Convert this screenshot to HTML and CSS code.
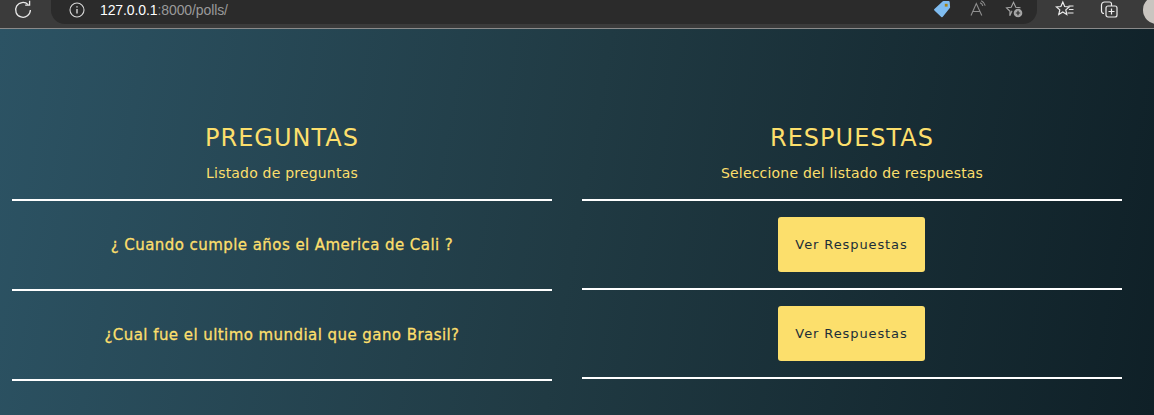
FILE: index.html
```html
<!DOCTYPE html>
<html lang="es">
<head>
<meta charset="utf-8">
<title>Polls</title>
<link rel="stylesheet" href="styles.css">
</head>
<body>
<header class="chrome">
  <svg class="reload" width="20" height="20" viewBox="0 0 20 20" fill="none" stroke="#e8e8e8" stroke-width="1.3"><path d="M15.2 4.6A7.4 7.4 0 1 0 17.4 10"/><path d="M16.6 0.8v4.4h-4.4"/></svg>
  <div class="address">
    <svg class="info" width="16" height="16" viewBox="0 0 16 16" fill="none" stroke="#d8d8d8" stroke-width="1.1"><circle cx="8" cy="8" r="7"/><path d="M8 7v4.6M8 4.2v1.3" stroke-width="1.4"/></svg>
    <span class="url"><span class="host">127.0.0.1</span>:8000/polls/</span>
    <div class="address-icons">
      <svg width="20" height="20" viewBox="0 0 20 20"><path d="M11.5 1h5.2a1 1 0 0 1 1 .9l.4 5.2a1 1 0 0 1-.3.8l-7 8.9a1 1 0 0 1-1.5.1L2.4 10.600a1 1 0 0 1 0-1.500l8.400-7.800a1 1 0 0 1 .7-.3z" fill="#7fbcf0"/><rect x="12.800" y="3.800" width="2.800" height="2.800" fill="#a98412"/></svg>
      <svg width="20" height="20" viewBox="0 0 20 20" fill="none" stroke="#8f8f8f" stroke-width="1.1"><path d="M3 15.500 8.300 3.500 13.800 15.500M4.800 11.500h7.200"/><path d="M12 2.800a4.500 4.500 0 0 1 2.800 3.200M13.200 .8a7 7 0 0 1 4 4.800"/></svg>
      <svg width="20" height="20" viewBox="0 0 20 20" fill="none" stroke="#a6a6a6" stroke-width="1.1"><path d="M8 10.800 5.800 15.800 6 11.300 2.500 7.800l4.700-.6L9.500 2.200l2.300 5 4.700.6"/><circle cx="14" cy="13" r="4.300" fill="#a6a6a6" stroke="none"/><path d="M11.800 13h4.400M14 10.800v4.400" stroke="#2b2b2b" stroke-width="1.200"/></svg>
    </div>
  </div>
  <svg class="tool-fav" width="20" height="20" viewBox="0 0 20 20" fill="none" stroke="#eee" stroke-width="1.2"><path d="M7.800 2 9.700 6.500l4.500.4-3.400 3 1 4.500-4-2.400-4 2.400 1-4.500-3.400-3 4.500-.4z"/><path d="M13.500 6h5M14 9.500h4.500M12.500 13h6"/></svg>
  <svg class="tool-col" width="20" height="20" viewBox="0 0 20 20" fill="none" stroke="#eee" stroke-width="1.2"><path d="M4 13.500A2.500 2.500 0 0 1 1.500 11V5A3 3 0 0 1 4.500 2h5a2 2 0 0 1 2 2v2"/><rect x="6" y="6" width="11" height="11" rx="2"/><path d="M11.500 8.500v6M8.500 11.500h6"/></svg>
  <div class="avatar"></div>
</header>
<main class="page">
  <section class="col">
    <div class="head">
      <h1 class="title">PREGUNTAS</h1>
      <p class="sub">Listado de preguntas</p>
    </div>
    <div class="row"><p class="question">¿ Cuando cumple años el America de Cali ?</p></div>
    <div class="row"><p class="question">¿Cual fue el ultimo mundial que gano Brasil?</p></div>
  </section>
  <section class="col">
    <div class="head">
      <h1 class="title">RESPUESTAS</h1>
      <p class="sub">Seleccione del listado de respuestas</p>
    </div>
    <div class="row row-btn"><a class="btn" href="#">Ver Respuestas</a></div>
    <div class="row row-btn"><a class="btn" href="#">Ver Respuestas</a></div>
  </section>
</main>
</body>
</html>
```
FILE: styles.css
```css
* { box-sizing: border-box; }
html, body { margin: 0; height: 100%; overflow: hidden; }
body { font-family: "DejaVu Sans", sans-serif; background: #0f2027; }
.chrome {
  height: 29px; background: #3b3b3b; border-bottom: 1px solid #8a8a8a;
  display: flex; align-items: flex-start; padding-left: 13px; overflow: hidden;
}
.reload { flex: none; }
.address {
  width: 986px; height: 24px; margin-left: 18px; background: #2b2b2b;
  border-radius: 0 0 14px 14px; display: flex; align-items: center; padding-left: 18px; flex: none;
}
.info { flex: none; margin-top: -4px; }
.url { font: 14px "Liberation Sans", sans-serif; letter-spacing: -0.1px; color: #9a9a9a; margin-left: 15px; margin-top: -5px; }
.host { color: #fff; font-weight: 400; }
.address-icons { margin-left: auto; margin-right: 13px; display: flex; gap: 16px; margin-top: -4px; }
.tool-fav { margin-left: 18px; flex: none; }
.tool-col { margin-left: 25px; flex: none; }
.avatar {
  width: 28px; height: 28px; border-radius: 50%; margin: -4px 0 0 23px; flex: none;
  background: radial-gradient(circle at 70% 35%, #8e8a86 0 24%, #c9c5c0 26%);
}
.page {
  height: 386px; padding: 0 32px 0 12px; display: grid; grid-template-columns: 540px 540px; column-gap: 30px;
  background: linear-gradient(100deg, #2c5364 0%, #203a43 50%, #0f2027 100%);
  align-content: start;
}
.head { height: 172px; padding-top: 95px; text-align: center; border-bottom: 2px solid #fff; color: #fcdf6c; }
.title { margin: 0; font-size: 24px; font-weight: 400; line-height: 28px; letter-spacing: 1px; }
.sub { margin: 11px 0 0; font-size: 14px; line-height: 20px; letter-spacing: 0.2px; }
.row { height: 90px; display: flex; justify-content: center; align-items: center; border-bottom: 2px solid #fff; }
.row-btn { height: 89px; padding-right: 1px; }
.question { margin: 0; font-size: 15px; font-weight: 400; letter-spacing: 0.44px; color: #fcdf6c; -webkit-text-stroke: 0.3px #fcdf6c; }
.btn {
  width: 147px; height: 55px; background: #fcdf6c; border-radius: 3px; color: #1b2e38;
  font-size: 13px; letter-spacing: 0.9px; display: flex; align-items: center; justify-content: center; text-decoration: none;
}
```
